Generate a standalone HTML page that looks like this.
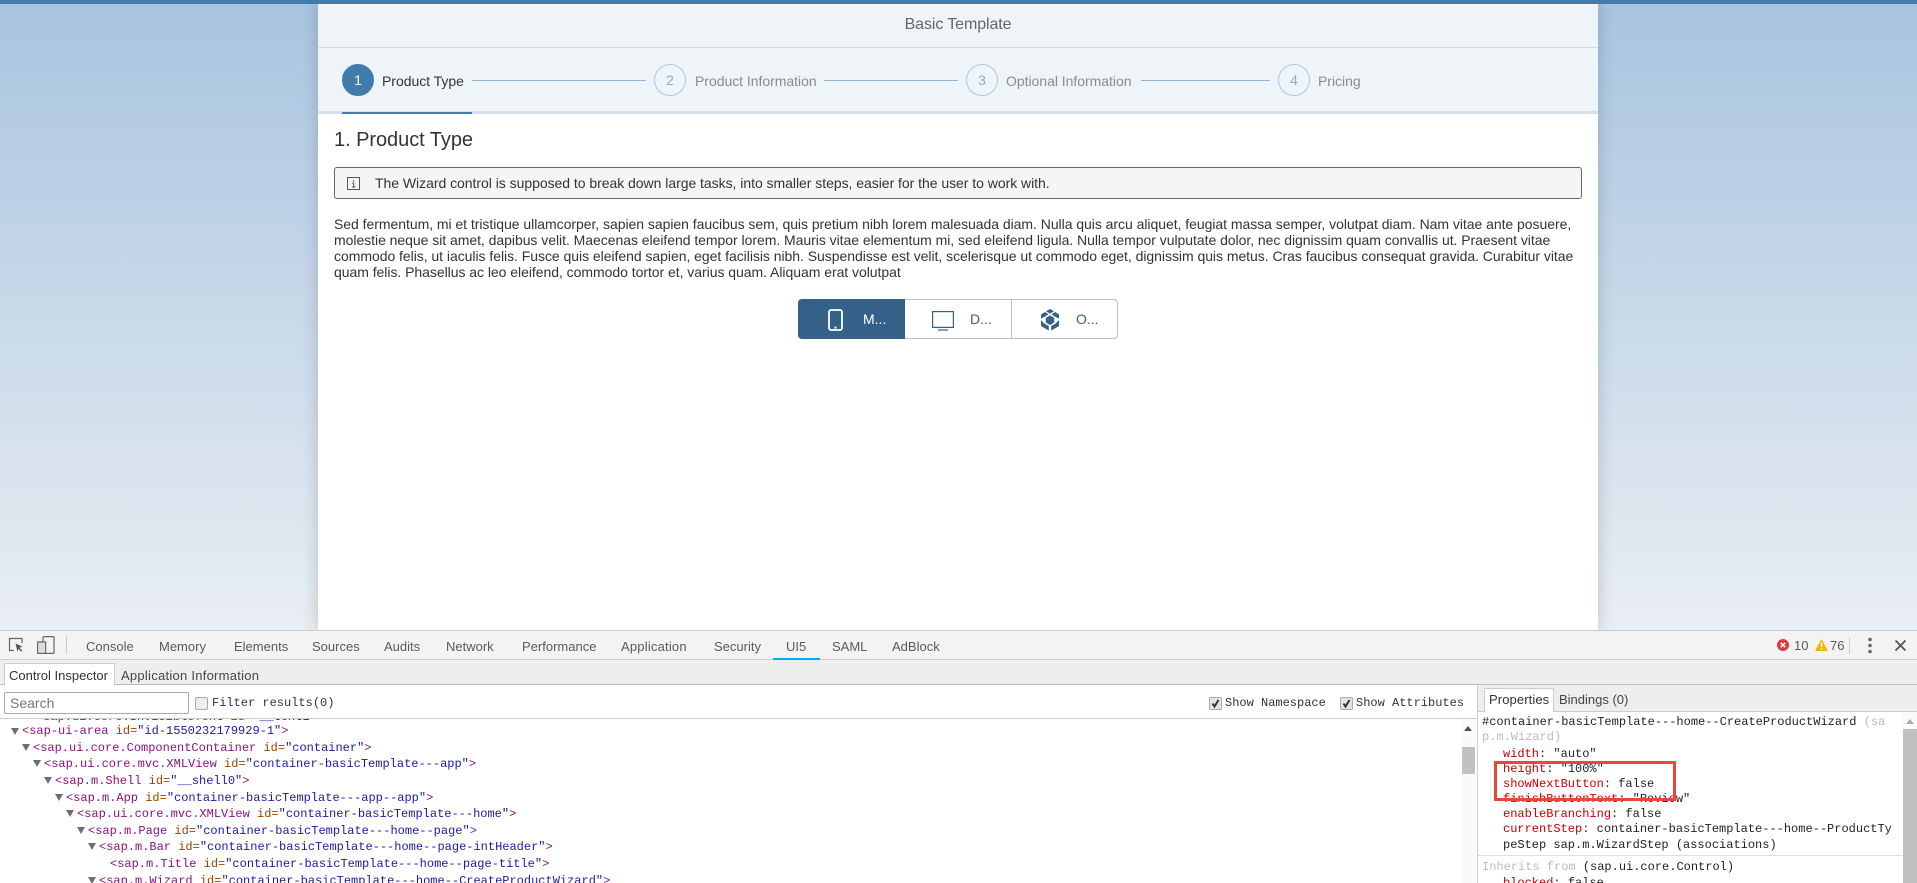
<!DOCTYPE html>
<html lang="en"><head><meta charset="utf-8"><title>Basic Template</title>
<style>
html,body{margin:0;padding:0;width:1917px;height:883px;overflow:hidden;background:#fff}
body{position:relative;font-family:"Liberation Sans",sans-serif}
.a{position:absolute;white-space:pre}
#bg{left:0;top:0;width:1917px;height:630px;background:linear-gradient(#a8c4df 0,#e9eef3 630px)}
#top{left:0;top:0;width:1917px;height:4px;background:#427cac;z-index:3}
#panel{left:318px;top:0;width:1280px;height:630px;background:#fff;box-shadow:0 0 16px rgba(0,0,0,.18)}
#h1{left:318px;top:4px;width:1280px;height:43px;line-height:42px;background:#eff4f9;border-bottom:1px solid #cfdeec;text-align:center;font-size:16px;color:#666;letter-spacing:-.1px}
#nav{left:318px;top:48px;width:1280px;height:63px;background:#eff4f9;border-bottom:3px solid #d2e0ee}
.c{width:30px;height:30px;border:1px solid #a9c6e0;border-radius:50%;top:64px;line-height:30px;text-align:center;font-size:14px;color:#8fa9c2;background:transparent}
.c.on{background:#427cac;border-color:#427cac;color:#fff}
.l{top:73px;font-size:14px;line-height:16px;color:#8b8b8b;letter-spacing:-.03px}
.ln{top:80px;height:1px;background:#8fb3d4}
.p{left:334px;font-size:14px;line-height:16px;color:#333;letter-spacing:-.04px}
#seg{left:798px;top:299px;width:320px;height:40px;box-sizing:border-box;border:1px solid #bfbfbf;border-radius:4px}
.dt{font-size:13px;color:#5a5a5a;line-height:16px;top:639px}
.m{font-family:"Liberation Mono",monospace;font-size:12px;line-height:16px}
.t{color:#881280}.n{color:#994500}.v{color:#1a1aa6}
.pl{left:1482px;color:#222}
.r{color:#c80000}.g{color:#bbb}
.tr{width:0;height:0;border-left:4px solid transparent;border-right:4px solid transparent;border-top:7px solid #6e6e6e}
.chk{width:11px;height:11px;border:1px solid #aaa;border-radius:2px;background:#e4e4e4}
</style></head><body>
<div class="a" id="bg"></div>
<div class="a" id="panel"></div>
<div class="a" id="top"></div>
<div class="a" id="h1">Basic Template</div>
<div class="a" id="nav"></div>
<div class="a" style="left:342px;top:112px;width:130px;height:2px;background:#427cac"></div>

<div class="a c on" style="left:342px">1</div><div class="a l" style="left:382px;color:#32363a">Product Type</div><div class="a ln" style="left:472px;width:174px"></div>
<div class="a c" style="left:654px">2</div><div class="a l" style="left:695px">Product Information</div><div class="a ln" style="left:824px;width:134px"></div>
<div class="a c" style="left:966px">3</div><div class="a l" style="left:1006px">Optional Information</div><div class="a ln" style="left:1141px;width:129px"></div>
<div class="a c" style="left:1278px">4</div><div class="a l" style="left:1318px">Pricing</div>

<div class="a" style="left:334px;top:128px;font-size:20px;line-height:24px;color:#333;letter-spacing:-.05px">1. Product Type</div>
<div class="a" style="left:334px;top:167px;width:1248px;height:32px;box-sizing:border-box;background:#f4f5f7;border:1px solid #666;border-radius:3px"></div>
<svg class="a" style="left:347px;top:177px" width="13" height="13" viewBox="0 0 13 13" fill="none" stroke="#555" stroke-width="1"><rect x=".5" y=".5" width="12" height="12"/><path d="M6.500 3v1.400M5 6h1.700v4M5 10h3.500"/></svg>
<div class="a" style="left:375px;top:175px;font-size:14px;line-height:16px;color:#333;letter-spacing:-.035px">The Wizard control is supposed to break down large tasks, into smaller steps, easier for the user to work with.</div>

<div class="a p" style="top:216px">Sed fermentum, mi et tristique ullamcorper, sapien sapien faucibus sem, quis pretium nibh lorem malesuada diam. Nulla quis arcu aliquet, feugiat massa semper, volutpat diam. Nam vitae ante posuere,</div>
<div class="a p" style="top:232px">molestie neque sit amet, dapibus velit. Maecenas eleifend tempor lorem. Mauris vitae elementum mi, sed eleifend ligula. Nulla tempor vulputate dolor, nec dignissim quam convallis ut. Praesent vitae</div>
<div class="a p" style="top:248px">commodo felis, ut iaculis felis. Fusce quis eleifend sapien, eget facilisis nibh. Suspendisse est velit, scelerisque ut commodo eget, dignissim quis metus. Cras faucibus consequat gravida. Curabitur vitae</div>
<div class="a p" style="top:264px">quam felis. Phasellus ac leo eleifend, commodo tortor et, varius quam. Aliquam erat volutpat</div>

<div class="a" id="seg"></div>
<div class="a" style="left:798px;top:299px;width:107px;height:40px;background:#346187;border-radius:4px 0 0 4px"></div>
<div class="a" style="left:1011px;top:299px;width:1px;height:40px;background:#bfbfbf"></div>
<svg class="a" style="left:828px;top:309px" width="15" height="22" viewBox="0 0 15 22" fill="none"><rect x="1" y="1" width="13" height="20" rx="2" stroke="#fff" stroke-width="1.800"/><rect x="6.500" y="17.600" width="2" height="2" fill="#fff"/></svg>
<div class="a" style="left:863px;top:311px;font-size:14px;line-height:16px;color:#fff">M...</div>
<svg class="a" style="left:932px;top:311px" width="22" height="20" viewBox="0 0 22 20" fill="none" stroke="#346187" stroke-width="1.200"><rect x=".6" y=".6" width="20.800" height="15.800"/><path d="M6 19h10"/></svg>
<div class="a" style="left:970px;top:311px;font-size:14px;line-height:16px;color:#346187">D...</div>
<svg class="a" style="left:1040px;top:309px" width="20" height="22" viewBox="0 0 20 22" fill="#346187"><path d="M10 0l4 2.200-4 2.400-4-2.400zM4.800 3l3.800 2.300L4.400 8 1 9.500V5.600zM15.200 3L19 5.600v3.900L15.600 8l-4.200-2.700zM10 6.400l4.200 2.500v4.600L10 16l-4.200-2.500V8.900zM1 11l3.400 3.600 4.400 2.400v4.600L1 17zM19 11l-3.400 3.600-4.400 2.400v4.600L19 17z"/></svg>
<div class="a" style="left:1076px;top:311px;font-size:14px;line-height:16px;color:#346187">O...</div>

<!-- DevTools -->
<div class="a" style="left:0;top:630px;width:1917px;height:253px;background:#fff"></div>
<div class="a" style="left:0;top:630px;width:1917px;height:30px;background:#f3f3f3;border-top:1px solid #ccc;border-bottom:1px solid #ccc;box-sizing:border-box"></div>
<div class="a" style="left:0;top:660px;width:1917px;height:25px;background:#eee;border-bottom:1px solid #bbb;box-sizing:border-box"></div>
<svg class="a" style="left:8px;top:637px" width="17" height="17" viewBox="0 0 17 17" fill="none" stroke="#666" stroke-width="1.200"><path d="M6 13.500H1.500V1.500H14V6"/><path d="M7.500 6.500l7 3-3 1.200 2.800 3-1 1-2.800-3-1 3z" fill="#555" stroke="none"/></svg>
<svg class="a" style="left:37px;top:636px" width="18" height="18" viewBox="0 0 18 18" fill="none" stroke="#666" stroke-width="1.200"><rect x="6" y=".6" width="11" height="16.800" rx="1"/><rect x=".6" y="6" width="8" height="11.400" fill="#ddd"/></svg>
<div class="a" style="left:66px;top:636px;width:1px;height:18px;background:#ccc"></div>
<div class="a dt" style="left:86px">Console</div>
<div class="a dt" style="left:159px">Memory</div>
<div class="a dt" style="left:234px">Elements</div>
<div class="a dt" style="left:312px">Sources</div>
<div class="a dt" style="left:384px">Audits</div>
<div class="a dt" style="left:446px">Network</div>
<div class="a dt" style="left:522px">Performance</div>
<div class="a dt" style="left:621px;letter-spacing:.2px">Application</div>
<div class="a dt" style="left:714px">Security</div>
<div class="a dt" style="left:786px">UI5</div>
<div class="a dt" style="left:832px">SAML</div>
<div class="a dt" style="left:892px">AdBlock</div>
<div class="a" style="left:773px;top:658px;width:47px;height:2px;background:#03a9f4"></div>

<svg class="a" style="left:1777px;top:639px" width="12" height="12" viewBox="0 0 12 12"><circle cx="6" cy="6" r="6" fill="#e0393e"/><path d="M3.800 3.800l4.400 4.400M8.200 3.800L3.800 8.200" stroke="#fff" stroke-width="1.500"/></svg>
<div class="a dt" style="left:1794px;top:638px">10</div>
<svg class="a" style="left:1815px;top:639px" width="13" height="12" viewBox="0 0 13 12"><path d="M6.500 0L13 12H0z" fill="#f4b400"/><path d="M6.500 3.500v4.500M6.500 9.200v1.500" stroke="#fff" stroke-width="1.400"/></svg>
<div class="a dt" style="left:1830px;top:638px">76</div>
<div class="a" style="left:1849px;top:637px;width:1px;height:17px;background:#ccc"></div>
<svg class="a" style="left:1867px;top:637px" width="6" height="17" viewBox="0 0 6 17" fill="#666"><circle cx="3" cy="2.500" r="1.800"/><circle cx="3" cy="8.500" r="1.800"/><circle cx="3" cy="14.500" r="1.800"/></svg>
<svg class="a" style="left:1895px;top:640px" width="11" height="11" viewBox="0 0 11 11" stroke="#555" stroke-width="1.800"><path d="M.5.5l10 10M10.500.5l-10 10"/></svg>

<div class="a" style="left:4px;top:663px;width:111px;height:23px;box-sizing:border-box;background:#fff;border:1px solid #ccc;border-bottom:0"></div>
<div class="a dt" style="left:9px;top:668px;color:#333">Control Inspector</div>
<div class="a dt" style="left:121px;top:668px;color:#444;letter-spacing:.26px">Application Information</div>

<div class="a" style="left:0;top:718px;width:1477px;height:1px;background:#ccc"></div>
<div class="a" style="left:4px;top:692px;width:185px;height:22px;box-sizing:border-box;background:#fff;border:1px solid #aaa;border-radius:2px;padding-left:5px;line-height:20px;font-size:14px;color:#777">Search</div>
<div class="a chk" style="left:195px;top:697px;background:#eee"></div>
<div class="a m" style="left:212px;top:695px;color:#333">Filter results(0)</div>
<div class="a chk" style="left:1209px;top:697px"></div>
<svg class="a" style="left:1210px;top:698px" width="11" height="11" viewBox="0 0 11 11" fill="none" stroke="#333" stroke-width="2"><path d="M2.500 5.500l2 3 4-6.500"/></svg>
<div class="a m" style="left:1225px;top:695px;color:#333">Show Namespace</div>
<div class="a chk" style="left:1340px;top:697px"></div>
<svg class="a" style="left:1341px;top:698px" width="11" height="11" viewBox="0 0 11 11" fill="none" stroke="#333" stroke-width="2"><path d="M2.500 5.500l2 3 4-6.500"/></svg>
<div class="a m" style="left:1356px;top:695px;color:#333">Show Attributes</div>

<!-- tree -->
<div class="a" style="left:0;top:719px;width:1461px;height:164px;overflow:hidden">
<div class="a m" style="left:36px;top:-10px"><span class="t">&lt;sap.ui.core.InvisibleText</span> <span class="n">id=</span><span class="v">"__text1"</span><span class="t">&gt;</span></div>
<div class="a tr" style="left:11px;top:9px"></div><div class="a m" style="left:22px;top:4px"><span class="t">&lt;sap-ui-area</span> <span class="n">id=</span><span class="v">"id-1550232179929-1"</span><span class="t">&gt;</span></div>
<div class="a tr" style="left:22px;top:25px"></div><div class="a m" style="left:33px;top:21px"><span class="t">&lt;sap.ui.core.ComponentContainer</span> <span class="n">id=</span><span class="v">"container"</span><span class="t">&gt;</span></div>
<div class="a tr" style="left:33px;top:41px"></div><div class="a m" style="left:44px;top:37px"><span class="t">&lt;sap.ui.core.mvc.XMLView</span> <span class="n">id=</span><span class="v">"container-basicTemplate---app"</span><span class="t">&gt;</span></div>
<div class="a tr" style="left:44px;top:58px"></div><div class="a m" style="left:55px;top:54px"><span class="t">&lt;sap.m.Shell</span> <span class="n">id=</span><span class="v">"__shell0"</span><span class="t">&gt;</span></div>
<div class="a tr" style="left:55px;top:75px"></div><div class="a m" style="left:66px;top:71px"><span class="t">&lt;sap.m.App</span> <span class="n">id=</span><span class="v">"container-basicTemplate---app--app"</span><span class="t">&gt;</span></div>
<div class="a tr" style="left:66px;top:91px"></div><div class="a m" style="left:77px;top:87px"><span class="t">&lt;sap.ui.core.mvc.XMLView</span> <span class="n">id=</span><span class="v">"container-basicTemplate---home"</span><span class="t">&gt;</span></div>
<div class="a tr" style="left:77px;top:108px"></div><div class="a m" style="left:88px;top:104px"><span class="t">&lt;sap.m.Page</span> <span class="n">id=</span><span class="v">"container-basicTemplate---home--page"</span><span class="t">&gt;</span></div>
<div class="a tr" style="left:88px;top:124px"></div><div class="a m" style="left:99px;top:120px"><span class="t">&lt;sap.m.Bar</span> <span class="n">id=</span><span class="v">"container-basicTemplate---home--page-intHeader"</span><span class="t">&gt;</span></div>
<div class="a m" style="left:110px;top:137px"><span class="t">&lt;sap.m.Title</span> <span class="n">id=</span><span class="v">"container-basicTemplate---home--page-title"</span><span class="t">&gt;</span></div>
<div class="a tr" style="left:88px;top:158px"></div><div class="a m" style="left:99px;top:154px"><span class="t">&lt;sap.m.Wizard</span> <span class="n">id=</span><span class="v">"container-basicTemplate---home--CreateProductWizard"</span><span class="t">&gt;</span></div>
</div>

<!-- left scrollbar -->
<div class="a" style="left:1461px;top:719px;width:14px;height:164px;background:#fafafa"></div>
<div class="a" style="left:1464px;top:726px;width:0;height:0;border-left:4px solid transparent;border-right:4px solid transparent;border-bottom:5px solid #505050"></div>
<div class="a" style="left:1462px;top:747px;width:13px;height:27px;background:#c1c1c1"></div>

<!-- right pane -->
<div class="a" style="left:1477px;top:685px;width:440px;height:198px;background:#fff;border-left:1px solid #ccc;box-sizing:border-box"></div>
<div class="a" style="left:1478px;top:685px;width:439px;height:27px;background:#eee;border-bottom:1px solid #ccc;box-sizing:border-box"></div>
<div class="a" style="left:1484px;top:688px;width:70px;height:24px;box-sizing:border-box;background:#fff;border:1px solid #ccc;border-bottom:0"></div>
<div class="a dt" style="left:1489px;top:692px;color:#333;letter-spacing:.1px">Properties</div>
<div class="a dt" style="left:1559px;top:692px;color:#444">Bindings (0)</div>

<div class="a m pl" style="top:714px">#container-basicTemplate---home--CreateProductWizard <span class="g">(sa</span></div>
<div class="a m pl" style="top:729px;color:#bbb">p.m.Wizard)</div>
<div class="a m pl" style="left:1503px;top:746px"><span class="r">width</span>: "auto"</div>
<div class="a m pl" style="left:1503px;top:761px"><span class="r">height</span>: "100%"</div>
<div class="a m pl" style="left:1503px;top:776px"><span class="r">showNextButton</span>: false</div>
<div class="a m pl" style="left:1503px;top:791px"><span class="r">finishButtonText</span>: "Review"</div>
<div class="a m pl" style="left:1503px;top:806px"><span class="r">enableBranching</span>: false</div>
<div class="a m pl" style="left:1503px;top:821px"><span class="r">currentStep</span>: container-basicTemplate---home--ProductTy</div>
<div class="a m pl" style="left:1503px;top:837px">peStep sap.m.WizardStep (associations)</div>
<div class="a" style="left:1478px;top:855px;width:425px;height:1px;background:#ddd"></div>
<div class="a m pl" style="top:859px"><span class="g">Inherits from</span> (sap.ui.core.Control)</div>
<div class="a m pl" style="left:1503px;top:875px"><span class="r">blocked</span>: false</div>
<div class="a" style="left:1494px;top:761px;width:182px;height:40px;box-sizing:border-box;border:3px solid #e8473f"></div>

<div class="a" style="left:1903px;top:712px;width:14px;height:171px;background:#fafafa"></div>
<div class="a" style="left:1906px;top:719px;width:0;height:0;border-left:4px solid transparent;border-right:4px solid transparent;border-bottom:5px solid #aaa"></div>
<div class="a" style="left:1903px;top:729px;width:14px;height:154px;background:#c1c1c1"></div>
</body></html>
